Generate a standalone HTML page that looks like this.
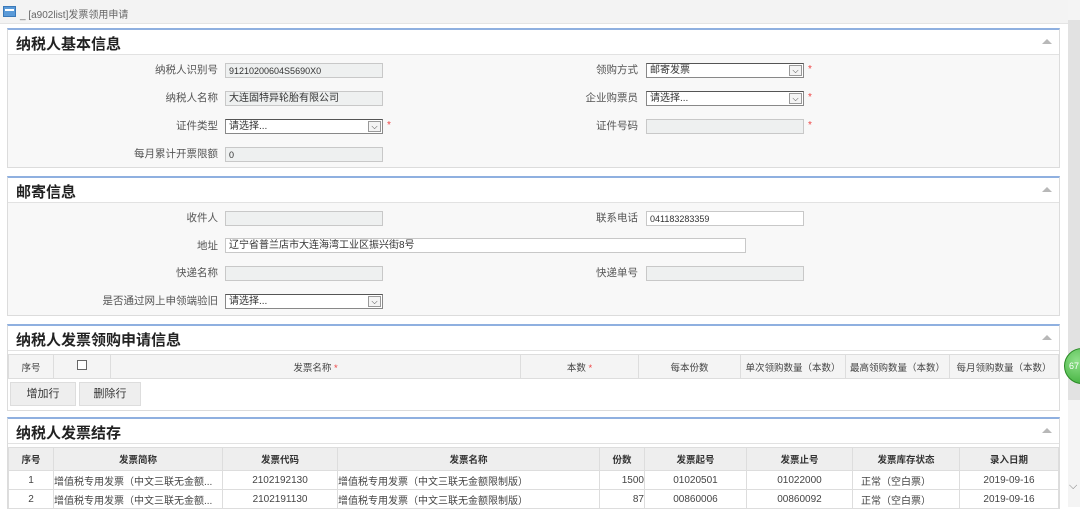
<!DOCTYPE html>
<html><head><meta charset="utf-8"><style>
*{margin:0;padding:0;box-sizing:border-box}
body{width:1080px;height:507px;overflow:hidden;background:#fff;font-family:"Liberation Sans","Noto Sans CJK SC",sans-serif;font-size:10px;color:#333;position:relative}
.a{position:absolute}
.top{left:0;top:0;width:1080px;height:24px;background:#f3f3f3;border-bottom:1px solid #e4e4e4}
.panel{position:absolute;left:7px;width:1053px;background:#f8f8f8;border:1px solid #dcdcdc;border-top:2px solid #8fb0e0}
.ph{height:25px;background:#fff;border-bottom:1px solid #e2e2e2;font-size:15px;font-weight:bold;color:#222;padding:3px 0 0 8px}
.tri{position:absolute;right:7px;top:9px;width:0;height:0;border-left:5px solid transparent;border-right:5px solid transparent;border-bottom:5px solid #b8b8b8}
.lbl{position:absolute;text-align:right;color:#555;font-size:10.5px;width:200px;line-height:12px;margin-top:-3px}
.in{position:absolute;height:15px;border:1px solid #c8c8c8;background:#eef0f0;font-size:9px;padding:1px 3px;color:#333;line-height:12px}
.sel{position:absolute;height:15px;border:1px solid #888;border-top-color:#555;background:#fff;font-size:10px;padding:0 3px;line-height:13px}
.sel b{position:absolute;right:1px;top:1px;width:13px;height:11px;border:1px solid #999;background:#f4f4f4;font-size:8px;line-height:9px;text-align:center;font-weight:normal}
.st{position:absolute;color:#e44;font-size:10px}
table{border-collapse:collapse;position:absolute;font-size:9.5px}
td,th{border:1px solid #ddd;text-align:center;height:24px;color:#444;font-weight:normal;white-space:nowrap;overflow:hidden}
.t4 th{font-weight:bold;background:#eee;height:23px;color:#333}
.t4 td{background:#fff;height:19px;font-size:10px}
.btn{position:absolute;top:382px;height:24px;background:#eee;border:1px solid #ddd;font-size:11px;text-align:center;line-height:22px;color:#333}
</style></head><body>
<div class="a top"></div>
<div class="a" style="left:3px;top:6px;width:13px;height:11px;background:#5a9ad8;border:1px solid #3a78b8"></div>
<div class="a" style="left:5px;top:9px;width:9px;height:2px;background:#fff"></div>
<div class="a" style="left:20px;top:6px;font-size:10px;color:#666">_ [a902list]发票领用申请</div>

<div class="panel" style="top:28px;height:140px"><div class="ph">纳税人基本信息</div><div class="tri"></div></div>
<div class="lbl" style="left:18px;top:67px">纳税人识别号</div><div class="in" style="left:225px;top:63px;width:158px">91210200604S5690X0</div>
<div class="lbl" style="left:18px;top:95px">纳税人名称</div><div class="in" style="left:225px;top:91px;width:158px;font-size:10px">大连固特异轮胎有限公司</div>
<div class="lbl" style="left:18px;top:123px">证件类型</div><div class="sel" style="left:225px;top:119px;width:158px">请选择...<b>⌵</b></div><div class="st" style="left:387px;top:120px">*</div>
<div class="lbl" style="left:18px;top:151px">每月累计开票限额</div><div class="in" style="left:225px;top:147px;width:158px">0</div>
<div class="lbl" style="left:438px;top:67px">领购方式</div><div class="sel" style="left:646px;top:63px;width:158px">邮寄发票<b>⌵</b></div><div class="st" style="left:808px;top:64px">*</div>
<div class="lbl" style="left:438px;top:95px">企业购票员</div><div class="sel" style="left:646px;top:91px;width:158px">请选择...<b>⌵</b></div><div class="st" style="left:808px;top:92px">*</div>
<div class="lbl" style="left:438px;top:123px">证件号码</div><div class="in" style="left:646px;top:119px;width:158px"></div><div class="st" style="left:808px;top:120px">*</div>

<div class="panel" style="top:176px;height:140px"><div class="ph">邮寄信息</div><div class="tri"></div></div>
<div class="lbl" style="left:18px;top:215px">收件人</div><div class="in" style="left:225px;top:211px;width:158px"></div>
<div class="lbl" style="left:18px;top:243px">地址</div><div class="in" style="left:225px;top:238px;width:521px;background:#fff;font-size:10px">辽宁省普兰店市大连海湾工业区振兴街8号</div>
<div class="lbl" style="left:18px;top:270px">快递名称</div><div class="in" style="left:225px;top:266px;width:158px"></div>
<div class="lbl" style="left:18px;top:298px">是否通过网上申领端验旧</div><div class="sel" style="left:225px;top:294px;width:158px">请选择...<b>⌵</b></div>
<div class="lbl" style="left:438px;top:215px">联系电话</div><div class="in" style="left:646px;top:211px;width:158px;background:#fff">041183283359</div>
<div class="lbl" style="left:438px;top:270px">快递单号</div><div class="in" style="left:646px;top:266px;width:158px"></div>

<div class="panel" style="top:324px;height:87px;background:#fff"><div class="ph">纳税人发票领购申请信息</div><div class="tri"></div></div>
<table style="left:8px;top:354px;width:1051px;background:#f4f4f4"><tr>
<td style="width:45px">序号</td><td style="width:57px"><span style="display:inline-block;width:10px;height:10px;border:1px solid #666;background:#fff"></span></td><td style="width:410px">发票名称 <span style="color:#e44">*</span></td><td style="width:118px">本数 <span style="color:#e44">*</span></td><td style="width:102px">每本份数</td><td style="width:105px">单次领购数量（本数）</td><td style="width:104px">最高领购数量（本数）</td><td>每月领购数量（本数）</td></tr></table>
<div class="btn" style="left:10px;width:66px">增加行</div><div class="btn" style="left:79px;width:62px">删除行</div>

<div class="panel" style="top:417px;height:92px;background:#fff"><div class="ph">纳税人发票结存</div><div class="tri"></div></div>
<table class="t4" style="left:8px;top:447px;width:1051px">
<tr><th style="width:45px">序号</th><th style="width:169px">发票简称</th><th style="width:115px">发票代码</th><th style="width:262px">发票名称</th><th style="width:45px">份数</th><th style="width:102px">发票起号</th><th style="width:106px">发票止号</th><th style="width:107px">发票库存状态</th><th>录入日期</th></tr>
<tr><td>1</td><td style="text-align:left">增值税专用发票（中文三联无金额...</td><td>2102192130</td><td style="text-align:left">增值税专用发票（中文三联无金额限制版）</td><td style="text-align:right">1500</td><td>01020501</td><td>01022000</td><td style="text-align:left;padding-left:8px">正常（空白票）</td><td>2019-09-16</td></tr>
<tr><td>2</td><td style="text-align:left">增值税专用发票（中文三联无金额...</td><td>2102191130</td><td style="text-align:left">增值税专用发票（中文三联无金额限制版）</td><td style="text-align:right">87</td><td>00860006</td><td>00860092</td><td style="text-align:left;padding-left:8px">正常（空白票）</td><td>2019-09-16</td></tr>
</table>

<div class="a" style="left:1068px;top:0;width:12px;height:507px;background:#f4f4f4"></div>
<div class="a" style="left:1068px;top:20px;width:12px;height:380px;background:#e2e2e2"></div>
<div class="a" style="left:1069px;top:480px;font-size:11px;color:#777">⌵</div>
<div class="a" style="left:1064px;top:348px;width:36px;height:36px;border-radius:50%;background:radial-gradient(circle at 35% 35%,#8fe08a,#2ea42a);border:1px solid #2a8a26;color:#fff;font-size:9px;line-height:34px;padding-left:4px">67</div>
</body></html>
